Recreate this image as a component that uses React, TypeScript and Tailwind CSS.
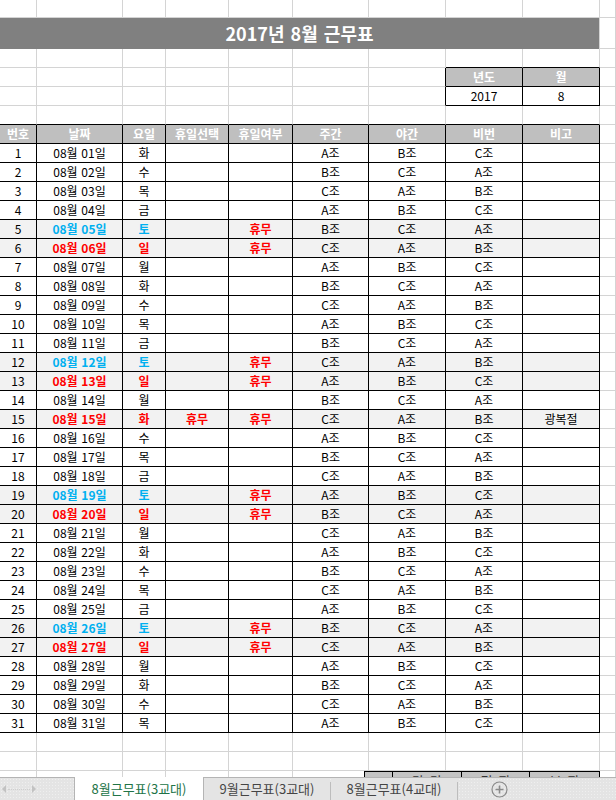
import React from "react";

const DAYS = ["화", "수", "목", "금", "토", "일", "월"];
const TEAMS = ["A조", "B조", "C조"];

interface Cell {
  text?: string;
  cls?: string;
  table?: boolean;
}

interface Row {
  h: string;
  cells: Cell[];
}

const blank = (): Cell => ({});

function buildRows(): Row[] {
  const rows: Row[] = [];
  const empty = (h: string): Row => ({ h, cells: Array.from({ length: 10 }, blank) });

  // ===== TOP AREA ===== //
  rows.push(empty("h-[19px]"));
  const yearHead = empty("h-[19px]");
  yearHead.cells[7] = { text: "년도", cls: "bg-[#bfbfbf] text-white font-bold", table: true };
  yearHead.cells[8] = { text: "월", cls: "bg-[#bfbfbf] text-white font-bold", table: true };
  rows.push(yearHead);
  const yearVal = empty("h-[19px]");
  yearVal.cells[7] = { text: "2017", table: true };
  yearVal.cells[8] = { text: "8", table: true };
  rows.push(yearVal);
  rows.push(empty("h-[19px]"));

  // ===== HEADER ===== //
  const heads = ["번호", "날짜", "요일", "휴일선택", "휴일여부", "주간", "야간", "비번", "비고"];
  rows.push({
    h: "h-[19px]",
    cells: [
      ...heads.map((t) => ({ text: t, cls: "bg-[#bfbfbf] text-white font-bold", table: true })),
      blank(),
    ],
  });

  // ===== DAYS ===== //
  for (let i = 0; i < 31; i++) {
    const day = i + 1;
    const dow = DAYS[i % 7];
    const sat = dow === "토";
    const red = dow === "일" || day === 15;
    const off = sat || red;
    const bg = off ? "bg-[#f2f2f2]" : "bg-white";
    const hl = sat ? "text-[#00b0f0] font-bold" : red ? "text-[#ff0000] font-bold" : "";
    const dd = String(day).padStart(2, "0");
    rows.push({
      h: "h-[19px]",
      cells: [
        { text: String(day), cls: bg, table: true },
        { text: `08월 ${dd}일`, cls: `${bg} ${hl} [word-spacing:1px]`, table: true },
        { text: dow, cls: `${bg} ${hl}`, table: true },
        { text: day === 15 ? "휴무" : "", cls: `${bg} text-[#ff0000] font-bold`, table: true },
        { text: off ? "휴무" : "", cls: `${bg} text-[#ff0000] font-bold`, table: true },
        { text: TEAMS[i % 3], cls: bg, table: true },
        { text: TEAMS[(i + 1) % 3], cls: bg, table: true },
        { text: TEAMS[(i + 2) % 3], cls: bg, table: true },
        { text: day === 15 ? "광복절" : "", cls: bg, table: true },
        blank(),
      ],
    });
  }

  rows.push(empty("h-[19px]"));
  rows.push(empty("h-[19px]"));
  return rows;
}

function SheetRow({ row, next }: { row: Row; next?: Row }) {
  return (
    <>
      {row.cells.map((c, ci) => {
        const right = c.table || row.cells[ci + 1]?.table;
        const bottom = c.table || next?.cells[ci]?.table;
        return (
          <div
            key={ci}
            className={`${row.h} flex items-center justify-center overflow-hidden whitespace-nowrap border-r border-b ${
              right ? "border-r-black" : "border-r-[#d4d4d4]"
            } ${bottom ? "border-b-black" : "border-b-[#d4d4d4]"} ${c.cls ?? ""}`}
          >
            {c.text}
          </div>
        );
      })}
    </>
  );
}

function PlusCircle() {
  return (
    <svg width="17" height="17" viewBox="0 0 17 17" fill="none">
      <circle cx="8.5" cy="8.5" r="7.5" stroke="#8a8a8a" strokeWidth="1.2" />
      <path d="M8.5 4.5v8M4.5 8.5h8" stroke="#8a8a8a" strokeWidth="1.6" />
    </svg>
  );
}

export default function App() {
  const rows = buildRows();
  const dots =
    "bg-[#e4e4e4] bg-[radial-gradient(circle,#efefef_0.7px,transparent_0.9px)] bg-[length:3px_3px]";

  return (
    <div className="flex h-[800px] w-[616px] flex-col overflow-hidden bg-white font-['Noto_Sans_CJK_KR',sans-serif] text-[12px] text-black">
      {/* ===== SHEET ===== */}
      <div className="h-[777px] overflow-hidden">
        <div className="grid grid-cols-[37px_86px_43px_63px_64px_76px_77px_77px_77px_1fr]">
          {/* row above title */}
          {Array.from({ length: 10 }, (_, i) => (
            <div key={i} className="h-[18px] border-r border-b border-[#d4d4d4]" />
          ))}
          {/* title */}
          <div className="col-span-9 flex h-[31px] items-center justify-center border-r border-r-[#d4d4d4] bg-[#808080] text-[18px] font-bold text-white [word-spacing:2px]">
            2017년 8월 근무표
          </div>
          <div className="h-[31px] border-r border-b border-[#d4d4d4]" />

          {rows.map((r, i) => (
            <SheetRow key={i} row={r} next={rows[i + 1]} />
          ))}
        </div>

        {/* row under the table, with the approval picture on it */}
        <div className="relative grid grid-cols-[37px_86px_43px_63px_64px_76px_77px_77px_77px_1fr]">
          {Array.from({ length: 10 }, (_, i) => (
            <div key={i} className="h-[19px] border-r border-b border-[#d4d4d4]" />
          ))}
          <div className="absolute left-[364px] top-0 flex h-[30px] border-l border-t border-black bg-[#c4c4c4] text-[13px] leading-[13px] text-[#333]">
            <div className="w-[28px] border-r border-black" />
            <div className="flex w-[69px] justify-center gap-[6px] border-r border-black pt-[2px]">
              <span>담</span>
              <span>당</span>
            </div>
            <div className="flex w-[68px] justify-center gap-[6px] border-r border-black pt-[2px]">
              <span>팀</span>
              <span>장</span>
            </div>
            <div className="flex w-[70px] justify-center gap-[6px] border-r border-black pt-[2px]">
              <span>부</span>
              <span>장</span>
            </div>
          </div>
        </div>
      </div>

      {/* ===== SHEET TABS ===== */}
      <div className="flex h-[23px] text-[13px] text-[#444]">
        <div className={`flex w-[75px] items-center gap-[2px] border-t border-r border-[#b4b4b4] pl-[2px] ${dots}`}>
          <span className="h-0 w-0 border-y-[4px] border-r-[4px] border-y-transparent border-r-[#c2c2c2]" />
          <span className="h-0 w-[22px] border-t border-dotted border-[#cfcfcf]" />
          <span className="h-0 w-0 border-y-[4px] border-l-[4px] border-y-transparent border-l-[#c2c2c2]" />
        </div>
        <div className="flex w-[128px] items-center justify-center bg-white text-[#217346]">
          8월근무표(3교대)
        </div>
        <div className={`flex flex-1 items-stretch border-t border-[#b4b4b4] ${dots}`}>
          <div className="flex w-[127px] items-center justify-center border-l border-[#b4b4b4] bg-[#e4e4e4]">
            9월근무표(3교대)
          </div>
          <div className="mt-[4px] w-px bg-[#bdbdbd]" />
          <div className="flex w-[126px] items-center justify-center bg-[#e4e4e4]">
            8월근무표(4교대)
          </div>
          <div className="mt-[4px] w-px bg-[#bdbdbd]" />
          <div className="ml-[33px] flex items-center">
            <PlusCircle />
          </div>
        </div>
      </div>
    </div>
  );
}
